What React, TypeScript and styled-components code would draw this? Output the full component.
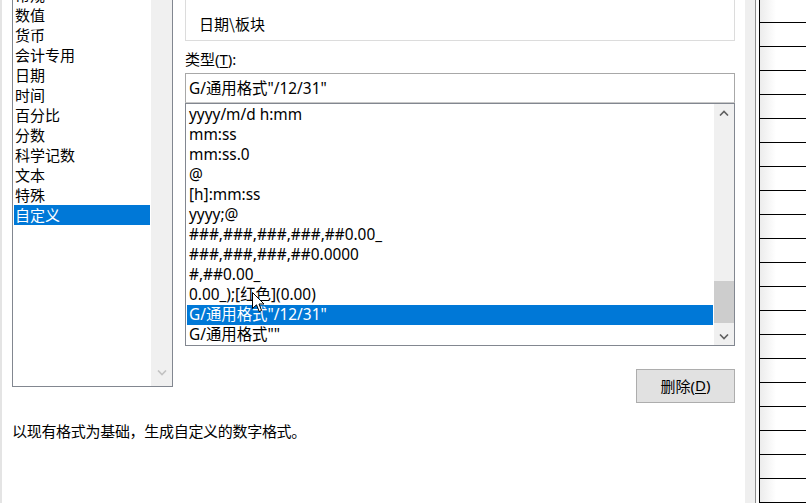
import React from "react";
import styled, { createGlobalStyle } from "styled-components";

const Global = createGlobalStyle`
  html, body { margin: 0; padding: 0; background: #ffffff; }
  body { font-family: "Noto Sans", "Noto Sans CJK SC", sans-serif; font-size: 15px; color: #000; }
  * { box-sizing: border-box; }
`;

const Root = styled.div`
  position: relative;
  width: 806px;
  height: 503px;
  overflow: hidden;
  display: flex;
  background: #fff;
`;

const Dialog = styled.div`
  flex: 0 0 745px;
  display: flex;
  flex-direction: column;
  border-left: 2px solid #e4e4e4;
  padding: 0 10px 0 10px;
  margin-top: -17px;
`;

const Main = styled.div`
  display: flex;
  gap: 12px;
  align-items: flex-start;
`;

const CategoryList = styled.div`
  width: 161px;
  height: 404px;
  border: 1px solid #828790;
  display: flex;
  background: #fff;
`;

const Items = styled.div`
  flex: 1;
  padding: 1px 1px 0 1px;
  display: flex;
  flex-direction: column;
  overflow: hidden;
`;

const Item = styled.div<{ $sel?: boolean }>`
  height: 20px;
  line-height: 20px;
  padding-left: 1px;
  white-space: nowrap;
  font-family: "Noto Sans CJK SC", sans-serif;
  font-size: 15px;
  background: ${(p) => (p.$sel ? "#0078d7" : "transparent")};
  color: ${(p) => (p.$sel ? "#fff" : "#000")};
`;

const ScrollBar = styled.div<{ $w: number }>`
  flex: 0 0 ${(p) => p.$w}px;
  background: #f0f0f0;
  display: flex;
  flex-direction: column;
  align-items: stretch;
`;

const ArrowBtn = styled.div<{ $bottomPad?: number }>`
  height: ${(p) => 17 + (p.$bottomPad || 0)}px;
  padding-bottom: ${(p) => p.$bottomPad || 0}px;
  display: flex;
  align-items: center;
  justify-content: center;
`;

const Track = styled.div`
  flex: 1;
  display: flex;
  flex-direction: column;
`;

const Thumb = styled.div<{ $top: number; $h: number }>`
  margin-top: ${(p) => p.$top}px;
  height: ${(p) => p.$h}px;
  background: #cdcdcd;
`;

const Right = styled.div`
  width: 550px;
  display: flex;
  flex-direction: column;
`;

const Sample = styled.div`
  height: 58px;
  border: 1px solid #dcdcdc;
  display: flex;
  align-items: flex-end;
  padding: 0 0 6px 13px;
  font-family: "Noto Sans CJK SC", sans-serif;
  line-height: 20px;
`;

const Label = styled.div`
  margin-top: 8px;
  margin-bottom: 4px;
  height: 20px;
  line-height: 20px;
  font-family: "Noto Sans", "Noto Sans CJK SC", sans-serif;
`;

const Key = styled.span`
  text-decoration: underline;
  text-underline-offset: 2px;
`;

const Input = styled.div`
  height: 30px;
  border: 1px solid #a8a8a8;
  border-bottom-color: #c8c8c8;
  display: flex;
  align-items: center;
  padding: 0 0 1px 3px;
  font-size: 15.4px;
  white-space: nowrap;
`;

const FormatList = styled.div`
  height: 243px;
  border: 1px solid #828790;
  display: flex;
  background: #fff;
`;

const Rows = styled.div`
  flex: 1;
  padding: 1px 0 0 1px;
  overflow: hidden;
  display: flex;
  flex-direction: column;
`;

const Row = styled.div<{ $sel?: boolean }>`
  flex: 0 0 20px;
  height: 20px;
  line-height: 20px;
  padding-left: 2px;
  margin-right: 1px;
  font-size: 15.4px;
  white-space: nowrap;
  background: ${(p) => (p.$sel ? "#0078d7" : "transparent")};
  color: ${(p) => (p.$sel ? "#fff" : "#000")};
`;

const ButtonRow = styled.div`
  margin-top: 23px;
  display: flex;
  justify-content: flex-end;
`;

const Button = styled.div`
  width: 99px;
  height: 34px;
  background: #e1e1e1;
  border: 1px solid #adadad;
  display: flex;
  align-items: center;
  justify-content: center;
  padding-bottom: 2px;
  font-family: "Noto Sans", "Noto Sans CJK SC", sans-serif;
  color: #000;
`;

const Description = styled.div`
  margin-top: 18px;
  height: 20px;
  line-height: 20px;
  font-family: "Noto Sans CJK SC", sans-serif;
  font-size: 15px;
  letter-spacing: -0.3px;
  white-space: nowrap;
`;

const Sheet = styled.div`
  flex: 1;
  display: flex;
`;

const EdgeStrip = styled.div`
  flex: 0 0 11px;
  background: #efefef;
  border-right: 1px solid #8c8c8c;
`;

const Gap = styled.div`
  flex: 0 0 3px;
  background: #fbfbfb;
`;

const Grid = styled.div`
  flex: 1;
  border-left: 1px solid #000;
  display: flex;
  flex-direction: column;
  margin-top: -1px;
  background: linear-gradient(to right, #ececec, #ffffff 16px);
`;

const GridRow = styled.div`
  flex: 0 0 24px;
  border-bottom: 1px solid #000;
`;

const Cursor = styled.svg`
  position: absolute;
  left: 252px;
  top: 292px;
  pointer-events: none;
`;

const ChevUp = ({ color }: { color: string }) => (
  <svg width="10" height="6" viewBox="0 0 10 6">
    <polyline points="1,5.5 5,1.5 9,5.5" fill="none" stroke={color} strokeWidth="1.6" />
  </svg>
);
const ChevDown = ({ color }: { color: string }) => (
  <svg width="10" height="6" viewBox="0 0 10 6">
    <polyline points="1,0.5 5,4.5 9,0.5" fill="none" stroke={color} strokeWidth="1.6" />
  </svg>
);

const categories = ["常规", "数值", "货币", "会计专用", "日期", "时间", "百分比", "分数", "科学记数", "文本", "特殊", "自定义"];

const formats = [
  "yyyy/m/d h:mm",
  "mm:ss",
  "mm:ss.0",
  "@",
  "[h]:mm:ss",
  "yyyy;@",
  "###,###,###,###,##0.00_",
  "###,###,###,##0.0000",
  "#,##0.00_",
  "0.00_);[红色](0.00)",
  'G/通用格式"/12/31"',
  'G/通用格式""',
];

export default function App() {
  return (
    <>
      <Global />
      <Root>
        <Dialog>
          <Main>
            <CategoryList>
              <Items>
                {categories.map((c) => (
                  <Item key={c} $sel={c === "自定义"}>
                    {c}
                  </Item>
                ))}
              </Items>
              <ScrollBar $w={21}>
                <Track />
                <ArrowBtn $bottomPad={5}>
                  <ChevDown color="#c2c2c2" />
                </ArrowBtn>
              </ScrollBar>
            </CategoryList>
            <Right>
              <Sample>日期\板块</Sample>
              <Label>
                类型(<Key>T</Key>):
              </Label>
              <Input>G/通用格式"/12/31"</Input>
              <FormatList>
                <Rows>
                  {formats.map((f, i) => (
                    <Row key={i} $sel={i === 10}>
                      {f}
                    </Row>
                  ))}
                </Rows>
                <ScrollBar $w={20}>
                  <ArrowBtn>
                    <ChevUp color="#606060" />
                  </ArrowBtn>
                  <Track>
                    <Thumb $top={160} $h={42} />
                  </Track>
                  <ArrowBtn>
                    <ChevDown color="#606060" />
                  </ArrowBtn>
                </ScrollBar>
              </FormatList>
              <ButtonRow>
                <Button>
                  删除(<Key>D</Key>)
                </Button>
              </ButtonRow>
            </Right>
          </Main>
          <Description>以现有格式为基础，生成自定义的数字格式。</Description>
        </Dialog>
        <Sheet>
          <EdgeStrip />
          <Gap />
          <Grid>
            {Array.from({ length: 22 }).map((_, i) => (
              <GridRow key={i} />
            ))}
          </Grid>
        </Sheet>
        <Cursor width="13" height="21" viewBox="0 0 13 21">
          <path d="M0.5,0.5 L0.5,16.5 L4.5,12.8 L7.2,19.5 L9.6,18.5 L7,12 L12,12 Z" fill="#fff" stroke="#000" strokeWidth="1" />
        </Cursor>
      </Root>
    </>
  );
}
